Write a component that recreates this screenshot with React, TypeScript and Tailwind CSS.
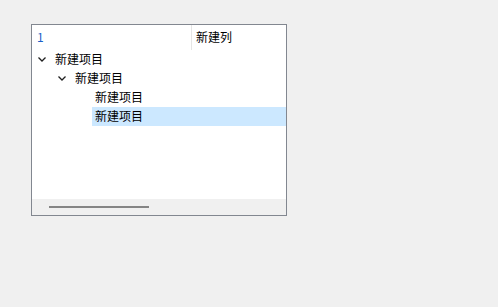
const FONT = { fontFamily: '"Microsoft YaHei UI", "Noto Sans CJK SC", sans-serif' };

function Chevron() {
  return (
    <svg width="8" height="5" viewBox="0 0 8 5" className="shrink-0">
      <path d="M0.5 0.5 L4 4 L7.5 0.5" fill="none" stroke="#1f1f1f" strokeWidth="1.3" />
    </svg>
  );
}

const ROWS = [
  { level: 0, expandable: true, selected: false },
  { level: 1, expandable: true, selected: false },
  { level: 2, expandable: false, selected: false },
  { level: 2, expandable: false, selected: true },
];

export default function App() {
  return (
    <div className="w-[498px] h-[307px] bg-[#f0f0f0] pt-[24px] pl-[31px]" style={FONT}>
      <div className="w-[256px] h-[192px] border border-[#828790] bg-white flex flex-col text-[12px] text-black">
        <div className="h-[25px] flex shrink-0">
          <div className="w-[160px] border-r border-[#e5e5e5] pl-[5px] pb-[1px] flex items-center text-[#1a5fc8]">1</div>
          <div className="flex-1 pl-[4px] pb-[1px] flex items-center">新建列</div>
        </div>
        <div className="flex-1 flex flex-col">
          {ROWS.map((r, i) => (
            <div key={i} className="h-[19px] flex items-center" style={{ paddingLeft: 4 + r.level * 20 }}>
              <div className="w-[19px] flex items-center pl-[2px]">{r.expandable && <Chevron />}</div>
              <div className={r.selected ? "flex-1 h-full flex items-center pb-[1px] pl-[3px] -ml-[3px] bg-[#cce8ff]" : "flex-1 h-full flex items-center pb-[1px]"}>
                新建项目
              </div>
            </div>
          ))}
        </div>
        <div className="h-[16px] bg-[#f0f0f0] flex items-center pl-[17px]">
          <div className="w-[100px] h-[2px] bg-[#858585]" />
        </div>
      </div>
    </div>
  );
}
